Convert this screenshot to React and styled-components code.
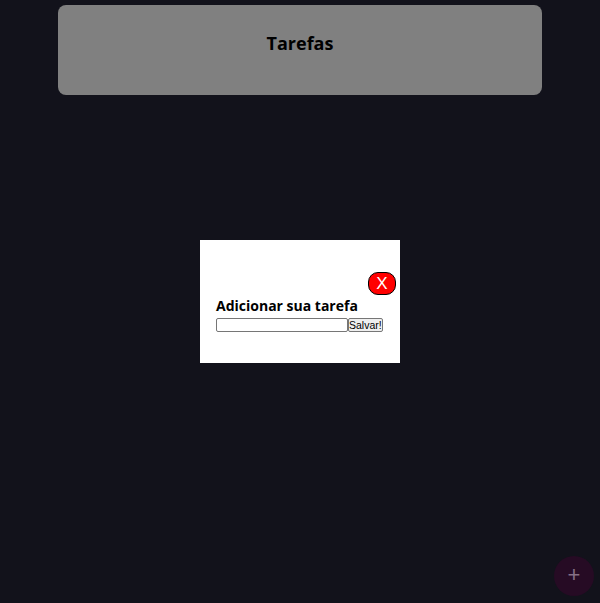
import React, { useState } from 'react';
import styled, { createGlobalStyle } from 'styled-components';

const GlobalStyle = createGlobalStyle`
  html, body {
    margin: 0;
    padding: 0;
    background: #12121b;
    font-family: "Open Sans", "Noto Sans", sans-serif;
  }
`;

const Page = styled.div`
  min-height: 603px;
  display: flex;
  flex-direction: column;
  align-items: center;
  padding-top: 5px;
  box-sizing: border-box;
`;

const Header = styled.header`
  width: 484px;
  height: 90px;
  background: #808080;
  border-radius: 8px;
  display: flex;
  align-items: center;
  justify-content: center;
`;

const Title = styled.h1`
  margin: 0 0 14px;
  font-size: 18px;
  font-weight: 700;
  color: #000;
`;

const Overlay = styled.div`
  position: fixed;
  inset: 0;
  display: flex;
  align-items: center;
  justify-content: center;
`;

const Modal = styled.div`
  width: 200px;
  background: #fff;
  padding: 32px 4px 31px 16px;
  box-sizing: border-box;
  display: flex;
  flex-direction: column;
`;

const CloseButton = styled.button`
  align-self: flex-end;
  width: 28px;
  height: 23px;
  padding: 0;
  border: 1px solid #000;
  border-radius: 10px;
  background: #f00;
  color: #fff;
  font-family: "Liberation Sans", Arial, sans-serif;
  font-size: 17px;
  line-height: 1;
  cursor: pointer;
`;

const ModalTitle = styled.h2`
  margin: 0 0 1px;
  font-size: 14px;
  font-weight: 700;
  line-height: 22px;
  color: #000;
`;

const Form = styled.form`
  display: flex;
`;

const TaskInput = styled.input`
  width: 132px;
  height: 14px;
  box-sizing: border-box;
  border: 1px solid #767676;
  border-radius: 2px;
  padding: 0 2px;
  font-size: 10px;
`;

const SaveButton = styled.button`
  height: 14px;
  box-sizing: border-box;
  padding: 0;
  border: 1px solid #767676;
  border-radius: 2px;
  background: #efefef;
  font-family: "Liberation Sans", Arial, sans-serif;
  font-size: 10.5px;
  line-height: 11px;
  color: #000;
`;

const Fab = styled.button`
  position: fixed;
  right: 6px;
  bottom: 7px;
  width: 40px;
  height: 40px;
  border-radius: 50%;
  border: none;
  background: #260b24;
  color: #857085;
  font-size: 22px;
  font-family: "Liberation Sans", Arial, sans-serif;
  line-height: 1;
  padding: 0 0 2px;
  display: flex;
  align-items: center;
  justify-content: center;
`;

export default function App() {
  const [task, setTask] = useState('');
  const [open, setOpen] = useState(true);

  return (
    <>
      <GlobalStyle />
      <Page>
        <Header>
          <Title>Tarefas</Title>
        </Header>
      </Page>
      {open && (
        <Overlay>
          <Modal>
            <CloseButton onClick={() => setOpen(false)}>X</CloseButton>
            <ModalTitle>Adicionar sua tarefa</ModalTitle>
            <Form onSubmit={(e) => e.preventDefault()}>
              <TaskInput value={task} onChange={(e) => setTask(e.target.value)} />
              <SaveButton type="submit">Salvar!</SaveButton>
            </Form>
          </Modal>
        </Overlay>
      )}
      <Fab onClick={() => setOpen(true)}>+</Fab>
    </>
  );
}
